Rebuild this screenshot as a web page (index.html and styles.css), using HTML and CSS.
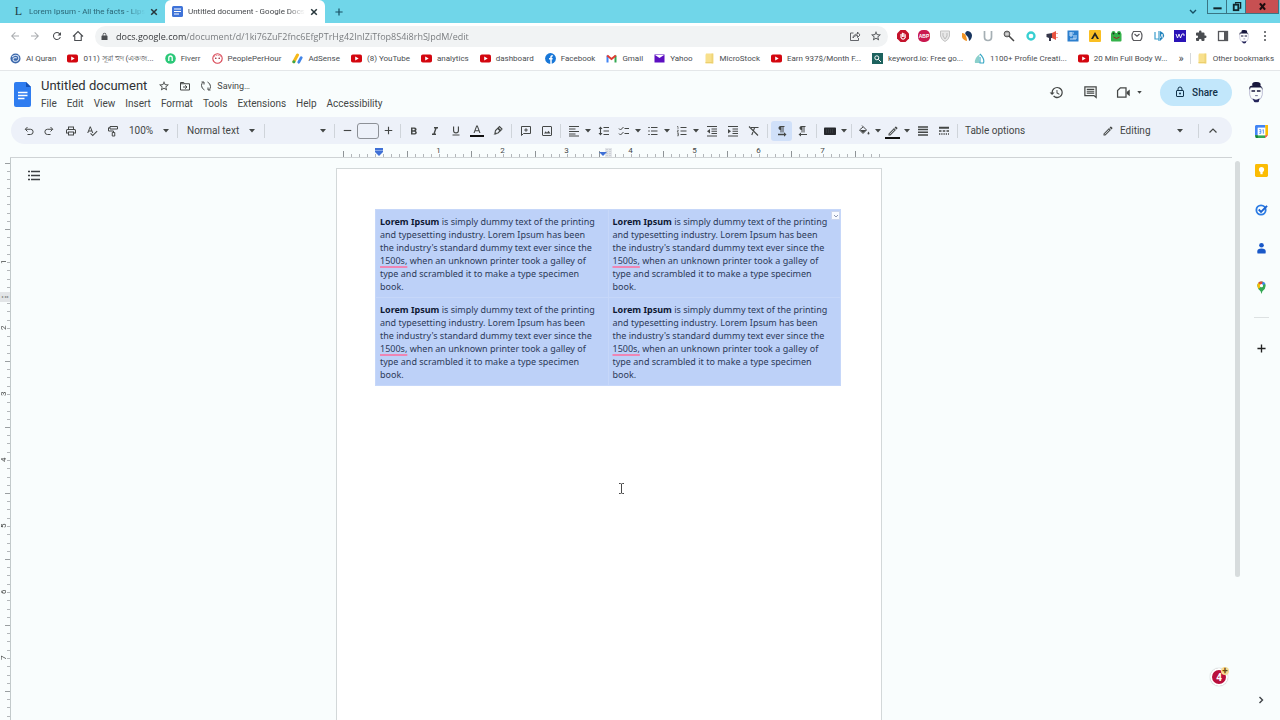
FILE: index.html
```html
<!DOCTYPE html>
<html lang="en">
<head>
<meta charset="utf-8">
<title>Untitled document - Google Docs</title>
<link rel="stylesheet" href="styles.css">
</head>
<body>
<svg class="defs" aria-hidden="true">
  <symbol id="caret" viewBox="0 0 6 4"><path d="M0 0h6L3 3.6z"/></symbol>
  <symbol id="close" viewBox="0 0 10 10"><path d="M1.5 1.5l7 7M8.500 1.500l-7 7" stroke="currentColor" stroke-width="1.900" fill="none"/></symbol>
  <symbol id="plus" viewBox="0 0 10 10"><path d="M5 .5v9M.5 5h9" stroke="currentColor" stroke-width="1.500" fill="none"/></symbol>
  <symbol id="doc" viewBox="0 0 17 25"><path d="M2 0h10l5 5v18a2 2 0 0 1-2 2H2a2 2 0 0 1-2-2V2a2 2 0 0 1 2-2z" fill="#2f7df0"/><path d="M12 0l5 5h-5z" fill="#1552b8"/><path d="M4 10.500h9.500M4 13.500h9.500M4 16.500h6.500" stroke="#fff" stroke-width="1.300"/></symbol>
  <symbol id="yt" viewBox="0 0 11 11"><rect y="1.500" width="11" height="8" rx="1.800" fill="#d3060f"/><path d="M4.200 3.600l3.500 1.900-3.500 1.900z" fill="#fff"/></symbol>
  <symbol id="folder" viewBox="0 0 11 11"><path d="M2 .5h7.500v10H1.500V2z" fill="#f8e08c"/><path d="M8.200.5v10M1.500 9.500h7" stroke="#e8ca66" stroke-width=".8"/></symbol>
  <symbol id="back" viewBox="0 0 24 24"><path d="M20 11H7.800l5.600-5.600L12 4l-8 8 8 8 1.400-1.400L7.800 13H20z"/></symbol>
  <symbol id="star" viewBox="0 0 24 24"><path d="M22 9.240l-7.190-.62L12 2 9.190 8.630 2 9.240l5.460 4.730L5.820 21 12 17.270 18.180 21l-1.630-7.030L22 9.240zM12 15.400l-3.760 2.270 1-4.280-3.320-2.880 4.380-.38L12 6.100l1.710 4.040 4.380.38-3.320 2.880 1 4.280L12 15.400z"/></symbol>
  <symbol id="pencil" viewBox="0 0 24 24"><path d="M14.060 9.020l.92.92L5.920 19H5v-.92l9.060-9.060M17.660 3c-.25 0-.51.1-.7.29l-1.830 1.830 3.750 3.750 1.830-1.830a1 1 0 0 0 0-1.410l-2.340-2.340c-.2-.2-.45-.29-.71-.29zm-3.600 3.190L3 17.250V21h3.750L17.810 9.940l-3.750-3.750z"/></symbol>
  <symbol id="pilcrow" viewBox="0 0 24 24"><path d="M9 10v5h2V4h2v11h2V4h2V2H9C6.800 2 5 3.800 5 6s1.800 4 4 4z"/></symbol>
  <symbol id="face" viewBox="0 0 20 24"><path d="M3 10C2 6 3 5 6 5 5 1 8 1 11 1q5 0 4 4 3 2 2 5l-1-3H4z" fill="#17173c"/><path d="M3 9v6q1 5 4 6M17 9v6q-1 5-4 6" fill="none" stroke="#b6b6cf" stroke-width="1"/><path d="M5 11h4M11 11h4" stroke="#17173c" stroke-width="1.700"/><path d="M9 16h3" stroke="#77779c" stroke-width="1.200"/><path d="M6 19q4 3 8 0l-1 4q-3 1-5 0z" fill="#24245a"/></symbol>
</svg>

<header class="browser">
  <div class="titlebar">
    <div class="tab">
      <span class="lip">L</span><span class="tab-title">Lorem Ipsum - All the facts - Lipsum</span>
      <button class="tab-close" aria-label="Close tab"><svg><use href="#close"/></svg></button>
    </div>
    <div class="tab active">
      <svg class="tab-ico" viewBox="0 0 11 11"><rect width="11" height="11" rx="1.500" fill="#3f73d8"/><path d="M2 3h7M2 5.500h7M2 8h5" stroke="#fff" stroke-width="1.200"/></svg><span class="tab-title">Untitled document - Google Docs</span>
      <button class="tab-close" aria-label="Close tab"><svg><use href="#close"/></svg></button>
    </div>
    <button class="new-tab" aria-label="New tab"><svg><use href="#plus"/></svg></button>
    <button class="tab-search" aria-label="Search tabs"><svg viewBox="0 0 8 5"><path d="M1 1l3 3 3-3" fill="none" stroke="#174f63" stroke-width="1.400"/></svg></button>
    <div class="window">
      <button aria-label="Minimize"><svg viewBox="0 0 12 12"><path d="M1.500 8h9" stroke="#10252b" stroke-width="2.200"/></svg></button>
      <button aria-label="Restore"><svg viewBox="0 0 12 12"><path d="M5 3V1.800h5.500v6H9" fill="none" stroke="#10252b" stroke-width="1.400"/><rect x="3" y="4" width="5" height="6" fill="none" stroke="#10252b" stroke-width="2"/></svg></button>
      <button class="win-close" aria-label="Close"><svg viewBox="0 0 12 12"><path d="M3.200 2.500l5.600 7M8.800 2.500l-5.600 7" stroke="#1d0c0e" stroke-width="2.300"/></svg></button>
    </div>
  </div>

  <div class="nav">
    <div class="nav-buttons">
      <button class="dim" aria-label="Back"><svg><use href="#back"/></svg></button>
      <button class="dim flip" aria-label="Forward"><svg><use href="#back"/></svg></button>
      <button aria-label="Reload"><svg viewBox="0 0 24 24"><path d="M17.650 6.350A8 8 0 1 0 19.730 14h-2.080A6 6 0 1 1 12 6c1.660 0 3.140.69 4.220 1.780L13 11h7V4z"/></svg></button>
      <button aria-label="Home"><svg viewBox="0 0 24 24"><path d="M2 13L12 3l10 10M5.500 11v10h13V11" fill="none" stroke="currentColor" stroke-width="2.200"/></svg></button>
    </div>
    <div class="omnibox">
      <svg class="lock" viewBox="0 0 24 24"><path d="M18 9h-1V7A5 5 0 0 0 7 7v2H6a2 2 0 0 0-2 2v10h16V11a2 2 0 0 0-2-2zM9 7a3 3 0 0 1 6 0v2H9z"/></svg>
      <input class="url" aria-label="Address" value="docs.google.com/document/d/1ki76ZuF2fnc6EfgPTrHg42InIZiTfop8S4i8rhSJpdM/edit">
      <button aria-label="Share page"><svg viewBox="0 0 24 24"><path d="M9 6H3v15h16v-5M8 16c0-5 4-8 9-8V4l5 6-5 5v-4c-4 0-7 1-9 5z" fill="none" stroke="currentColor" stroke-width="1.700"/></svg></button>
      <button aria-label="Bookmark"><svg><use href="#star"/></svg></button>
    </div>
    <div class="extensions">
      <button aria-label="AdBlock"><svg viewBox="0 0 12 12"><path d="M3.500 0h5L12 3.500v5L8.500 12h-5L0 8.500v-5z" fill="#c4122b"/><path d="M4 8V4M5.400 7V2.700M6.800 7V3M8.200 8V4.200M4 7.500q2 3.500 4.200 0" stroke="#fff" stroke-width="1.100" fill="none"/></svg></button>
      <button aria-label="Adblock Plus"><span class="abp">ABP</span></button>
      <button aria-label="Shield"><svg viewBox="0 0 12 12"><path d="M1.500 1h9v5q-1 4-4.500 5.500Q2.500 10 1.500 6z" fill="#e8e8e8" stroke="#c3c3c3"/><path d="M4 3v3l2 3 2-3V3" fill="none" stroke="#bbb"/></svg></button>
      <button aria-label="Similarweb"><svg viewBox="0 0 12 12"><path d="M6 1q4 0 5 4 0 4-3 6 0-4-3-6-2-2 1-4z" fill="#18355f"/><path d="M1 3q3 0 4 3t1 5q-4-1-5-4z" fill="#f29423"/></svg></button>
      <button aria-label="Ubersuggest"><svg viewBox="0 0 12 12"><path d="M2.500 1v6q0 3.500 3.500 3.500T9.500 7V1" fill="none" stroke="#a5afb4" stroke-width="1.700"/></svg></button>
      <button aria-label="Keyword search"><svg viewBox="0 0 12 12"><circle cx="4" cy="4" r="2.900" fill="#aaa" stroke="#555"/><path d="M6 6l5 5" stroke="#444" stroke-width="1.500"/><path d="M2.500 4h3" stroke="#fff"/></svg></button>
      <button aria-label="Ring"><svg viewBox="0 0 12 12"><circle cx="6" cy="6" r="3.500" fill="none" stroke="#37cfd1" stroke-width="2.300"/></svg></button>
      <button aria-label="Megaphone"><svg viewBox="0 0 12 12"><path d="M.5 4l6-1v5L5 8v3H3V8L.5 7z" fill="#36374b"/><path d="M6 3l4-2v9L6 8z" fill="#e85340"/><path d="M10.500 4l1-1M10.500 7l1 1" stroke="#e85340"/></svg></button>
      <button aria-label="Translate"><svg viewBox="0 0 12 12"><rect x=".5" y=".5" width="11" height="11" fill="#2c7fce"/><path d="M2 3h5M2 5h4M4 2v5M6 6h4M6 8h4M3 9h6" stroke="#d5eaff" stroke-width=".9"/></svg></button>
      <button aria-label="Amplifier"><svg viewBox="0 0 12 12"><rect width="12" height="12" rx="1" fill="#fabf22"/><path d="M2 9l4-7 4 7H8L6 5.500 4 9z" fill="#232323"/></svg></button>
      <button aria-label="Frog"><svg viewBox="0 0 12 12"><rect x="1" y="3" width="10.500" height="8.500" rx="1" fill="#35b24b"/><circle cx="3.500" cy="3" r="2" fill="#35b24b"/><circle cx="9" cy="3" r="2" fill="#35b24b"/><circle cx="3.500" cy="3.500" r="1" fill="#183c1f"/><circle cx="9" cy="3.500" r="1" fill="#183c1f"/><path d="M3.500 7q3 3 6 0" stroke="#a11f2a" fill="none"/></svg></button>
      <button aria-label="Mail"><svg viewBox="0 0 12 12"><path d="M2.500 1.500h7q1.500 2 1.500 4.500t-1.500 4.500h-7Q1 8.500 1 6t1.500-4.500z" fill="none" stroke="#59595d" stroke-width="1.200"/><path d="M3.500 4L6 6.200 8.500 4" fill="none" stroke="#59595d" stroke-width="1.200"/></svg></button>
      <button aria-label="LA"><svg viewBox="0 0 12 12"><path d="M2 2v7h4M6 1v10" stroke="#3a9ccb" fill="none" stroke-width="1.200"/><path d="M7 1q5 2 4 6L7 11z" fill="#2384bd"/><path d="M7.500 8L9 4l1 4" fill="none" stroke="#fff" stroke-width=".8"/></svg></button>
      <button aria-label="Write"><svg viewBox="0 0 12 12"><rect width="12" height="12" fill="#2a13b7"/><path d="M2 4l1.500 4L5 4l1.500 4L8 4h2v2" stroke="#fff" fill="none" stroke-width=".9"/></svg></button>
      <button aria-label="Extensions"><svg viewBox="0 0 24 24"><path d="M20.500 11H19V7a2 2 0 0 0-2-2h-4V3.500a2.500 2.500 0 0 0-5 0V5H4a2 2 0 0 0-2 2v3.800h1.500a2.700 2.700 0 0 1 0 5.400H2V20a2 2 0 0 0 2 2h3.800v-1.500a2.700 2.700 0 0 1 5.400 0V22H17a2 2 0 0 0 2-2v-4h1.500a2.500 2.500 0 0 0 0-5z"/></svg></button>
      <button aria-label="Side panel"><svg viewBox="0 0 12 12"><rect x="1.500" y="1.500" width="9" height="9" fill="none" stroke="#55565a" stroke-width="1.300"/><path d="M7 1.500h3.500v9H7z" fill="#55565a"/></svg></button>
      <button aria-label="Profile"><svg class="profile-ico"><use href="#face"/></svg></button>
      <button aria-label="Menu"><svg viewBox="0 0 24 24"><circle cx="12" cy="4" r="2"/><circle cx="12" cy="12" r="2"/><circle cx="12" cy="20" r="2"/></svg></button>
    </div>
  </div>

  <nav class="bookmarks" aria-label="Bookmarks">
    <a href="#"><svg viewBox="0 0 11 11"><circle cx="5.500" cy="5.500" r="5" fill="#3a67aa"/><path d="M2 4q3-3 6-1 2 3-1 5-4 1-4-2 1-2 4-1" fill="none" stroke="#d4e2f6" stroke-width="1.100"/></svg>Al Quran</a>
    <a href="#"><svg><use href="#yt"/></svg>011) সূরা হুদ (একজ...</a>
    <a href="#"><svg viewBox="0 0 11 11"><circle cx="5.500" cy="5.500" r="5.300" fill="#2bc878"/><path d="M3.800 8V4.800q0-1.800 1.700-1.800t1.700 1.800V8" fill="none" stroke="#fff" stroke-width="1.300"/></svg>Fiverr</a>
    <a href="#"><svg viewBox="0 0 11 11"><circle cx="5.500" cy="5.500" r="4.700" fill="#fff" stroke="#d94453" stroke-width="1.100"/><path d="M2 3.500Q5 1 9 3.500" fill="none" stroke="#d94453" stroke-dasharray="1 1"/><circle cx="3.800" cy="5.300" r=".8" fill="#8d1d2b"/><circle cx="7.200" cy="5.300" r=".8" fill="#8d1d2b"/></svg>PeoplePerHour</a>
    <a href="#"><svg viewBox="0 0 11 11"><path d="M1.800 8.700L5.500 2" stroke="#f6b91a" stroke-width="3" stroke-linecap="round"/><path d="M6.800 9.200l2.400-4.500" stroke="#4285e8" stroke-width="2.800" stroke-linecap="round"/><circle cx="1.900" cy="8.800" r="1.500" fill="#35a652"/></svg>AdSense</a>
    <a href="#"><svg><use href="#yt"/></svg>(8) YouTube</a>
    <a href="#"><svg><use href="#yt"/></svg>analytics</a>
    <a href="#"><svg><use href="#yt"/></svg>dashboard</a>
    <a href="#"><svg viewBox="0 0 11 11"><circle cx="5.500" cy="5.500" r="5.400" fill="#1877d8"/><path d="M6 11V4.200q0-1.500 1.800-1.400M4 5.800h3.600" stroke="#fff" stroke-width="1.500" fill="none"/></svg>Facebook</a>
    <a href="#"><svg viewBox="0 0 11 11"><path d="M1.500 9.500v-7" stroke="#4285f4" stroke-width="2"/><path d="M9.500 9.500v-7" stroke="#34a853" stroke-width="2"/><path d="M1.200 2.500l4.300 3.500 4.300-3.500" stroke="#df3b32" stroke-width="2" fill="none"/></svg>Gmail</a>
    <a href="#"><svg viewBox="0 0 11 11"><rect x=".5" y="1.500" width="10" height="8" fill="#5d0fc1"/><path d="M1 2l4.500 3L10 2" fill="#fff"/></svg>Yahoo</a>
    <a href="#"><svg><use href="#folder"/></svg>MicroStock</a>
    <a href="#"><svg><use href="#yt"/></svg>Earn 937$/Month F...</a>
    <a href="#"><svg viewBox="0 0 11 11"><rect width="11" height="11" fill="#1d625e"/><circle cx="4.800" cy="4.800" r="2" fill="none" stroke="#fff"/><path d="M6.300 6.300L9 9" stroke="#fff"/></svg>keyword.io: Free go...</a>
    <a href="#"><svg viewBox="0 0 11 11"><path d="M1 10q-1-5 5-9-2 5 0 9z" fill="#8bd0cb"/><path d="M6 1q5 5 3.500 9H6V4" fill="none" stroke="#37a7c4" stroke-width="1.100"/></svg>1100+ Profile Creati...</a>
    <a href="#"><svg><use href="#yt"/></svg>20 Min Full Body W...</a>
    <button class="more" aria-label="More bookmarks">»</button>
    <a href="#" class="other"><svg><use href="#folder"/></svg>Other bookmarks</a>
  </nav>
</header>

<div class="docs">
  <main class="main">
    <div class="head">
      <svg class="logo"><use href="#doc"/></svg>
      <div class="head-text">
        <div class="title-row">
          <h1>Untitled document</h1>
          <button aria-label="Star"><svg><use href="#star"/></svg></button>
          <button aria-label="Move"><svg viewBox="0 0 24 24"><path d="M3 5h6.500l2 2.500H21V20H3zM3 7.500h8" fill="none" stroke="currentColor" stroke-width="2"/><path d="M8 14h8M12.500 10.500L16 14l-3.500 3.500" fill="none" stroke="currentColor" stroke-width="2"/></svg></button>
          <span class="saving"><svg viewBox="0 0 24 24"><path d="M9 20Q3 17 3 11q0-4 3-6.500M3 4h5v5M15 4q6 3 6 9 0 4-3 6.500M21 20h-5v-5" fill="none" stroke="currentColor" stroke-width="2"/></svg>Saving…</span>
        </div>
        <div class="menus">
          <button>File</button><button>Edit</button><button>View</button><button>Insert</button><button>Format</button><button>Tools</button><button>Extensions</button><button>Help</button><button>Accessibility</button>
        </div>
      </div>
      <div class="head-actions">
        <button aria-label="History"><svg viewBox="0 0 24 24"><path d="M13 3a9 9 0 0 0-9 9H1l3.900 3.900L9 12H6a7 7 0 1 1 2.060 4.940l-1.420 1.420A9 9 0 1 0 13 3zm-1 5v5l4.250 2.520.77-1.280-3.520-2.090V8z"/></svg></button>
        <button aria-label="Comments"><svg viewBox="0 0 24 24"><path d="M3 3h18v17l-3.500-3H3z" fill="none" stroke="currentColor" stroke-width="2"/><path d="M6 7h12M6 10h12M6 13h12" stroke="currentColor" stroke-width="1.800"/></svg></button>
        <button class="meet" aria-label="Meet"><svg viewBox="0 0 24 24"><path d="M7 4.500h9v15H2.500V9z" fill="none" stroke="currentColor" stroke-width="2"/><path d="M17 11l5-4v11l-5-4z"/></svg><svg class="caret"><use href="#caret"/></svg></button>
        <button class="share"><svg viewBox="0 0 24 24"><rect x="5" y="9" width="14" height="12" rx="1" fill="none" stroke="currentColor" stroke-width="2"/><path d="M8 9V6a4 4 0 0 1 8 0v3" fill="none" stroke="currentColor" stroke-width="2"/><circle cx="12" cy="15" r="2"/></svg>Share</button>
      </div>
    </div>

    <div class="toolbar" role="toolbar">
      <button class="t" aria-label="Undo"><svg viewBox="0 0 24 24"><path d="M9 19h6a5 5 0 0 0 0-10.500H5M9 4L4.500 8.500 9 13" fill="none" stroke="currentColor" stroke-width="2"/></svg></button>
      <button class="t flip" aria-label="Redo"><svg viewBox="0 0 24 24"><path d="M9 19h6a5 5 0 0 0 0-10.500H5M9 4L4.500 8.500 9 13" fill="none" stroke="currentColor" stroke-width="2"/></svg></button>
      <button class="t" aria-label="Print"><svg viewBox="0 0 24 24"><path d="M19 8h-1V3H6v5H5a3 3 0 0 0-3 3v6h4v4h12v-4h4v-6a3 3 0 0 0-3-3zM8 5h8v3H8zm8 14H8v-4h8zm2-4v-2H6v2H4v-4a1 1 0 0 1 1-1h14a1 1 0 0 1 1 1v4z"/></svg></button>
      <button class="t" aria-label="Spelling"><svg viewBox="0 0 24 24"><path d="M12.450 16h2.090L9.430 3H7.570L2.460 16h2.090l1.120-3h5.640zm-6.020-5L8.500 5.480 10.570 11zm15.160.59l-8.090 8.090L9.830 16l-1.410 1.410 5.090 5.090L23 13z"/></svg></button>
      <button class="t" aria-label="Paint format"><svg viewBox="0 0 24 24"><path d="M6 3h15v5H6zM6 5.500H3V12h10v3" fill="none" stroke="currentColor" stroke-width="2"/><path d="M10.500 15h5v7h-5z" fill="none" stroke="currentColor" stroke-width="2"/></svg></button>
      <label class="combo zoom"><select aria-label="Zoom"><option>100%</option></select><svg class="caret"><use href="#caret"/></svg></label>
      <i class="sep"></i>
      <label class="combo style"><select aria-label="Style"><option>Normal text</option></select><svg class="caret"><use href="#caret"/></svg></label>
      <i class="sep"></i>
      <label class="combo font"><select aria-label="Font"><option></option></select><svg class="caret"><use href="#caret"/></svg></label>
      <i class="sep"></i>
      <button class="s" aria-label="Decrease font size"><svg viewBox="0 0 24 24"><path d="M2 12h20" stroke="currentColor" stroke-width="3"/></svg></button>
      <input class="size" aria-label="Font size">
      <button class="s" aria-label="Increase font size"><svg viewBox="0 0 24 24"><path d="M2 12h20M12 2v20" stroke="currentColor" stroke-width="3"/></svg></button>
      <i class="sep tight"></i>
      <button class="t" aria-label="Bold"><svg viewBox="0 0 24 24"><path d="M15.600 11.800c1-.7 1.600-1.800 1.600-2.800a4 4 0 0 0-4-4H6v14h8c2.100 0 3.700-1.700 3.700-3.800 0-1.500-.8-2.800-2.100-3.400zM9 7.500h3a1.500 1.500 0 0 1 0 3H9zm4 9H9v-3h4a1.500 1.500 0 0 1 0 3z"/></svg></button>
      <button class="t" aria-label="Italic"><svg viewBox="0 0 24 24"><path d="M10 4v3h2.200l-3.400 10H6v3h8v-3h-2.200l3.400-10H18V4z"/></svg></button>
      <button class="t" aria-label="Underline"><svg viewBox="0 0 24 24"><path d="M12 17a6 6 0 0 0 6-6V3h-2.300v8a3.700 3.700 0 0 1-7.400 0V3H6v8a6 6 0 0 0 6 6zm-7 2v2h14v-2z"/></svg></button>
      <button class="t color" aria-label="Text color"><svg viewBox="0 0 24 20"><path d="M10.600 1L5 16h2.300l1.200-3.500h7l1.200 3.500H19L13.400 1zM9.200 10.500L12 3l2.800 7.500z"/></svg></button>
      <button class="t" aria-label="Highlight"><svg viewBox="0 0 24 24"><path d="M6 16l1-5 8-8 5 5-8 8-5 1z" fill="none" stroke="currentColor" stroke-width="2.200"/><path d="M13 5l6 6-3 2-5-5zM3 19l4-4 2.500 2.500L8 19z"/></svg></button>
      <i class="sep"></i>
      <button class="t" aria-label="Add comment"><svg viewBox="0 0 24 24"><path d="M3 3h18v14H7l-4 4zM12 6.500v7M8.500 10h7" fill="none" stroke="currentColor" stroke-width="2"/></svg></button>
      <button class="t" aria-label="Insert image"><svg viewBox="0 0 24 24"><rect x="3" y="3" width="18" height="18" rx="1" fill="none" stroke="currentColor" stroke-width="2"/><path d="M6 17l3.500-4.500 2.500 3 3-4 4 5.500z"/></svg></button>
      <i class="sep"></i>
      <button class="c" aria-label="Align"><svg viewBox="0 0 24 24"><path d="M2 3h20M2 8h13M2 13h20M2 18h13M2 22h20" stroke="currentColor" stroke-width="2"/></svg><svg class="caret"><use href="#caret"/></svg></button>
      <button class="t" aria-label="Line spacing"><svg viewBox="0 0 24 24"><path d="M11 5h11M11 12h11M11 19h11M5 5v14" stroke="currentColor" stroke-width="2.200"/><path d="M1 8l4-5 4 5zM1 16l4 5 4-5z"/></svg></button>
      <button class="c" aria-label="Checklist"><svg viewBox="0 0 24 24"><path d="M13 7h9M13 17h9M2 7l3 3 6-6M2 17l3 3 6-6" fill="none" stroke="currentColor" stroke-width="2"/></svg><svg class="caret"><use href="#caret"/></svg></button>
      <button class="c" aria-label="Bulleted list"><svg viewBox="0 0 24 24"><path d="M8 5h13M8 12h13M8 19h13M2.500 5h3M2.500 12h3M2.500 19h3" stroke="currentColor" stroke-width="2.400"/></svg><svg class="caret"><use href="#caret"/></svg></button>
      <button class="c" aria-label="Numbered list"><svg viewBox="0 0 24 24"><path d="M9 5h12M9 12h12M9 19h12" stroke="currentColor" stroke-width="2.200"/><path d="M2 3h2v5M2 10.500h3l-3 3.500h3.500M2 16.500h3v5H2M3 19h2" fill="none" stroke="currentColor" stroke-width="1.300"/></svg><svg class="caret"><use href="#caret"/></svg></button>
      <button class="t" aria-label="Decrease indent"><svg viewBox="0 0 24 24"><path d="M2 3h20M11 8h11M11 12.500h11M11 17h11M2 22h20" stroke="currentColor" stroke-width="2"/><path d="M2 12.500L8 8v9z"/></svg></button>
      <button class="t" aria-label="Increase indent"><svg viewBox="0 0 24 24"><path d="M2 3h20M11 8h11M11 12.500h11M11 17h11M2 22h20" stroke="currentColor" stroke-width="2"/><path d="M8 12.500L2 8v9z"/></svg></button>
      <button class="t" aria-label="Clear formatting"><svg viewBox="0 0 24 24"><path d="M2 3l18 18M6 5h15M13 6l-2 5M10 14l-2.500 6" stroke="currentColor" stroke-width="2.200"/></svg></button>
      <i class="sep"></i>
      <button class="t on" aria-label="Left to right"><svg viewBox="0 0 24 24"><use href="#pilcrow"/><path d="M4 17.500h12v-3l5 4.500-5 4.500v-3H4z"/></svg></button>
      <button class="t" aria-label="Right to left"><svg viewBox="0 0 24 24"><use href="#pilcrow"/><path d="M20 18H8v-3l-5 4 5 4v-3h12z"/></svg></button>
      <i class="sep"></i>
      <button class="c" aria-label="Input tools"><svg viewBox="0 0 24 24"><rect x="0" y="5" width="24" height="15" rx="1.500" fill="#26282c"/><path d="M4 10h16M4 14h16" stroke="#5b6068" stroke-width="1.200" stroke-dasharray="2 2"/></svg><svg class="caret"><use href="#caret"/></svg></button>
      <i class="sep tight"></i>
      <button class="c" aria-label="Cell background"><svg viewBox="0 0 24 24"><path d="M8 1l9 9-7 7-7-7 7-6" fill="none" stroke="currentColor" stroke-width="2"/><path d="M4 10h13l-7 6zM21 13q-4 5 0 6 4-1 0-6z"/></svg><svg class="caret"><use href="#caret"/></svg></button>
      <button class="c border" aria-label="Border color"><svg><use href="#pencil"/></svg><svg class="caret"><use href="#caret"/></svg></button>
      <button class="t" aria-label="Border width"><svg viewBox="0 0 24 24"><path d="M2 4h20M2 9h20M2 14.500h20M2 20h20" stroke="currentColor" stroke-width="3"/></svg></button>
      <button class="t" aria-label="Border dash"><svg viewBox="0 0 24 24"><path d="M2 5.500h20" stroke="currentColor" stroke-width="4"/><path d="M2 12h20" stroke="currentColor" stroke-width="3" stroke-dasharray="5 2.500"/><path d="M2 18h20" stroke="currentColor" stroke-width="3" stroke-dasharray="2.500 2"/></svg></button>
      <i class="sep"></i>
      <button class="text-button">Table options</button>
      <label class="combo mode"><svg class="mode-ico"><use href="#pencil"/></svg><select aria-label="Mode"><option>Editing</option></select><svg class="caret"><use href="#caret"/></svg></label>
      <i class="sep"></i>
      <button class="t" aria-label="Hide menus"><svg viewBox="0 0 24 24"><path d="M5 15l7-7 7 7" fill="none" stroke="currentColor" stroke-width="2.400"/></svg></button>
    </div>

    <div class="hruler">
      <div class="hscale">
        <span>1</span><span>2</span><span>3</span><span>4</span><span>5</span><span>6</span><span>7</span>
        <svg class="marker first" viewBox="0 0 10 9"><path d="M1 0h8v4L5 8 1 4z" fill="#3f70d6"/><path d="M1 2.500h8" stroke="#a9c0ef" stroke-width=".7"/></svg>
        <svg class="marker second" viewBox="0 0 14 9"><path d="M7 0h7v9H7z" fill="#e2e5e9"/><path d="M9 1v7M12 1v7" stroke="#b6bbc2" stroke-dasharray="1 1"/><path d="M1 4h8L5 8z" fill="#3f70d6"/></svg>
      </div>
    </div>

    <div class="work">
      <div class="vruler"><div class="vscale"><span>1</span><span>2</span><span>3</span><span>4</span><span>5</span><span>6</span><span>7</span><b>⋮</b></div></div>
      <div class="canvas">
        <button class="outline" aria-label="Show outline"><svg viewBox="0 0 12 11"><path d="M3 1.500h9M3 5.500h9M3 9.500h9M0 1.500h2M0 5.500h2M0 9.500h2" stroke="#3c4043" stroke-width="1.500"/></svg></button>
        <article class="page">
          <table>
            <tbody>
              <tr>
                <td><strong>Lorem Ipsum</strong> is simply dummy text of the printing and typesetting industry. Lorem Ipsum has been the industry's standard dummy text ever since the <u>1500s,</u> when an unknown printer took a galley of type and scrambled it to make a type specimen book.</td>
                <td><strong>Lorem Ipsum</strong> is simply dummy text of the printing and typesetting industry. Lorem Ipsum has been the industry's standard dummy text ever since the <u>1500s,</u> when an unknown printer took a galley of type and scrambled it to make a type specimen book.<button class="cell-menu" aria-label="Cell options"><svg viewBox="0 0 6 4"><path d="M1 1l2 2 2-2" fill="none" stroke="#8d99b3"/></svg></button></td>
              </tr>
              <tr>
                <td><strong>Lorem Ipsum</strong> is simply dummy text of the printing and typesetting industry. Lorem Ipsum has been the industry's standard dummy text ever since the <u>1500s,</u> when an unknown printer took a galley of type and scrambled it to make a type specimen book.</td>
                <td><strong>Lorem Ipsum</strong> is simply dummy text of the printing and typesetting industry. Lorem Ipsum has been the industry's standard dummy text ever since the <u>1500s,</u> when an unknown printer took a galley of type and scrambled it to make a type specimen book.</td>
              </tr>
            </tbody>
          </table>
        </article>
      </div>
    </div>
  </main>

  <div class="scroll"><i></i></div>

  <aside class="side">
    <button class="avatar" aria-label="Account"><svg><use href="#face"/></svg></button>
    <button aria-label="Calendar"><svg viewBox="0 0 14 14"><path d="M1 0h10v3H3v8H0V1z" fill="#4285f4"/><path d="M11 0h3v11h-3z" fill="#fbbc04"/><path d="M0 11h11v3H1z" fill="#34a853"/><path d="M0 11h3v3H1z" fill="#188038"/><path d="M11 11h3l-3 3z" fill="#ea4335"/><path d="M3 3h8v8H3z" fill="#fff"/><path d="M4.500 5h1.800v4H4.500M4.800 7h1.500M8 5.500l1-.5v4.300" fill="none" stroke="#4285f4" stroke-width=".9"/></svg></button>
    <button aria-label="Keep"><svg viewBox="0 0 14 14"><rect width="14" height="14" rx="1.500" fill="#fbbc04"/><circle cx="7" cy="6" r="2.800" fill="#fff"/><path d="M5.800 8h2.400v3H5.800z" fill="#fff"/></svg></button>
    <button aria-label="Tasks"><svg viewBox="0 0 14 14"><circle cx="6.500" cy="7.500" r="5" fill="none" stroke="#2a7be4" stroke-width="2"/><path d="M4 7l2.500 2.500L13 3" fill="none" stroke="#1b62cf" stroke-width="2"/></svg></button>
    <button aria-label="Contacts"><svg viewBox="0 0 14 14"><circle cx="7" cy="3.500" r="2.500" fill="#1a58c8"/><path d="M2.500 10q0-3 4.500-3t4.500 3v1.500q0 1-1 1h-7q-1 0-1-1z" fill="#1a58c8"/></svg></button>
    <button aria-label="Maps"><svg viewBox="0 0 14 14"><path d="M7 .5a4.500 4.500 0 0 1 4.500 4.500Q11.500 8 8 11l-1 3-1-3Q2.500 8 2.500 5A4.500 4.500 0 0 1 7 .5z" fill="#34a853"/><path d="M7 5L3.500 2A4.500 4.500 0 0 1 8.500.8z" fill="#ea4335"/><path d="M8.500.8A4.500 4.500 0 0 1 11.200 3L7 5z" fill="#4285f4"/><path d="M7 5L3.500 2Q2 4 2.900 6.500L4 8.500z" fill="#fbbc04"/><circle cx="7" cy="5" r="1.700" fill="#fff"/></svg></button>
    <hr>
    <button class="add" aria-label="Get add-ons"><svg><use href="#plus"/></svg></button>
    <button class="collapse" aria-label="Hide side panel"><svg viewBox="0 0 6 8"><path d="M1.500 1l3 3-3 3" fill="none" stroke="#3f4347" stroke-width="1.400"/></svg></button>
  </aside>

  <button class="badge">4<span>+</span></button>
  <svg class="ibeam" viewBox="0 0 7 11"><path d="M1 .5h1.500l1 .5 1-.5H6M3.500 1v9M1 10.500h1.500l1-.5 1 .5H6" fill="none" stroke="#333" stroke-width=".9"/></svg>
</div>
</body>
</html>
```

FILE: styles.css
```css
* { box-sizing: border-box; }

body {
  margin: 0;
  height: 100vh;
  overflow: hidden;
  display: flex;
  flex-direction: column;
  font-family: Roboto, "Noto Sans", sans-serif;
  font-size: 10px;
  color: #444746;
  background: #f9fdfd;
}

.defs { position: absolute; width: 0; height: 0; }

button, input, select {
  font: inherit;
  color: inherit;
  border: 0;
  padding: 0;
  margin: 0;
  background: none;
  outline: 0;
}

button {
  display: flex;
  align-items: center;
  justify-content: center;
  flex: none;
}

svg { display: block; flex: none; fill: currentColor; }
.flip { transform: scaleX(-1); }
.caret { width: 6px; height: 4px; }

/* Browser window */
.browser {
  flex: none;
  background: #fff;
  border-bottom: 1px solid #e4e7e9;
  font-size: 8px;
  color: #4a4d51;
}

.titlebar {
  display: flex;
  height: 23px;
  padding-left: 6px;
  background: #70d6e9;
}

.tab {
  display: flex;
  align-items: center;
  width: 159px;
  padding: 0 7px;
  gap: 5px;
  color: #2b6676;
}

.tab.active { background: #fff; border-radius: 6px 6px 0 0; color: #44474b; width: 160px; }
.lip { width: 11px; text-align: center; font: 12px "Liberation Serif", serif; color: #203c44; }
.tab-ico { width: 11px; height: 11px; }

.tab-title {
  flex: 1;
  overflow: hidden;
  white-space: nowrap;
  mask-image: linear-gradient(90deg, #000 85%, transparent);
}

.tab-close svg { width: 8px; height: 8px; }
.tab-close { color: #27363b; }
.new-tab { width: 28px; color: #174f63; }
.new-tab svg { width: 8px; height: 8px; }
.tab-search { margin-left: auto; width: 16px; margin-right: 6px; }
.tab-search svg { width: 8px; height: 5px; }
.window { display: flex; height: 14px; margin-right: 1px; border: 1px solid #397584; border-top: 0; }
.window button { width: 19px; border-right: 1px solid #397584; }
.window .win-close { width: 32px; background: #c75052; border: 0; }
.window svg { width: 11px; height: 11px; }

.nav { display: flex; align-items: center; height: 25px; padding: 1px 4px 0 4px; }
.nav-buttons { display: flex; width: 91px; }
.nav-buttons button { width: 21px; }
.nav-buttons svg { width: 12px; height: 12px; }
.nav .dim { color: #a9acaf; }

.omnibox {
  flex: 1;
  display: flex;
  align-items: center;
  height: 21px;
  padding: 0 2px 0 5px;
  border-radius: 11px;
  background: #f1f3f4;
}

.lock { width: 9px; height: 9px; margin-right: 7px; }

.url {
  flex: 1;
  font-family: "Open Sans", "Noto Sans", sans-serif;
  font-size: 9px;
  color: transparent;
  background: linear-gradient(90deg, #303235 70px, #74777a 70px);
  background-clip: text;
}

.omnibox button { width: 21px; }
.omnibox button svg { width: 12px; height: 12px; }
.extensions { display: flex; width: 384px; margin-left: 4px; justify-content: space-around; }
.extensions button { width: 20px; }
.extensions svg { width: 12px; height: 12px; }
.extensions .profile-ico { height: 15px; }

.abp {
  width: 12px;
  border-radius: 5px;
  background: #c9184f;
  color: #fff;
  font: bold 5px/12px "Liberation Sans", sans-serif;
}

.bookmarks { display: flex; align-items: center; height: 22px; padding: 0 7px 2px 10px; gap: 11px; }
.bookmarks a { display: flex; align-items: center; gap: 5px; color: inherit; text-decoration: none; white-space: nowrap; }
.bookmarks svg { width: 11px; height: 11px; }
.bookmarks .more { margin-left: auto; font-size: 11px; }
.bookmarks .other { border-left: 1px solid #d5d8da; padding-left: 6px; margin-left: -5px; }

/* Editor frame */
.docs { position: relative; flex: 1; min-height: 0; display: flex; }
.main { flex: 1; min-width: 0; display: flex; flex-direction: column; }

.head { display: flex; align-items: flex-start; padding: 7px 0 0 14px; height: 46px; }
.logo { width: 17px; height: 25px; margin: 4px 10px 0 0; }
.head-text { flex: 1; }
.title-row { display: flex; align-items: center; height: 15px; }
.title-row h1 { margin: 0 11px 0 0; font-size: 13px; font-weight: 400; color: #2f3133; }
.title-row svg { width: 12px; height: 12px; }
.title-row button { width: 12px; margin-right: 9px; }
.saving { display: flex; align-items: center; gap: 5px; font-size: 9px; }
.menus { display: flex; gap: 10px; margin-top: 4px; }
.menus button { line-height: 13px; }

.head-actions { display: flex; align-items: center; height: 28px; }
.head-actions svg { width: 15px; height: 15px; }
.head-actions button { width: 34px; }
.head-actions .meet { width: 44px; gap: 6px; }
.head-actions .caret { width: 5px; height: 3px; }

.head-actions .share {
  width: 72px;
  height: 27px;
  gap: 6px;
  margin-left: 9px;
  border-radius: 14px;
  background: #c2e7fb;
  color: #123249;
  font-weight: 500;
}

.head-actions .share svg { width: 12px; height: 12px; }

.toolbar {
  display: flex;
  align-items: center;
  height: 27px;
  margin-left: 11px;
  padding: 0 9px 0 7px;
  border-radius: 14px;
  background: #edf1f9;
}

.toolbar .t { width: 21px; height: 20px; }
.toolbar svg { width: 12px; height: 12px; }
.toolbar .caret { width: 6px; height: 4px; }
.toolbar .s { width: 19px; }
.toolbar .s svg { width: 9px; height: 9px; }
.toolbar .c { width: 29px; height: 20px; gap: 5px; padding-left: 4px; justify-content: flex-start; }
.toolbar .on { background: #d0e0f9; border-radius: 3px; }
.color { flex-direction: column; }
.toolbar .color svg { height: 10px; }
.color::after { content: ""; width: 14px; height: 2px; background: #111; }
.border { position: relative; }
.border::after { content: ""; position: absolute; left: 2px; bottom: 2px; width: 15px; height: 2px; background: #111; }
.sep { width: 1px; height: 14px; margin: 0 3px; background: #cfd4da; flex: none; }
.sep.tight { margin: 0 2px; }
.combo { display: flex; align-items: center; flex: none; }
.combo select { flex: 1; min-width: 0; appearance: none; line-height: 14px; }
.zoom { width: 51px; padding: 0 5px 0 6px; }
.style { width: 80px; padding: 0 6px; }
.font { width: 63px; padding: 0 5px; }
.size { width: 22px; height: 16px; border: 1px solid #8d9197; border-radius: 3px; text-align: center; }
.text-button { margin-left: 4px; }
.mode { width: 93px; margin-left: auto; padding: 0 12px 0 0; }
.toolbar .mode-ico { margin-right: 6px; }

/* Rulers */
.hruler {
  height: 14px;
  margin-left: 10px;
  padding-right: 25px;
  display: flex;
  justify-content: center;
  border-bottom: 1px solid #cfd3d5;
}

.hscale {
  position: relative;
  display: flex;
  width: 546px;
  padding-left: 71px;
  font-size: 8px;
  line-height: 14px;
  background:
    linear-gradient(90deg, #8f9497 1px, transparent 1px) 7px 100% / 64px 6px repeat-x,
    linear-gradient(90deg, #b3b7ba 1px, transparent 1px) 7px 100% / 8px 3px repeat-x;
}

.hscale span { width: 64px; flex: none; text-align: center; }
.marker { position: absolute; top: 4px; height: 9px; }
.first { left: 38px; width: 10px; }
.second { left: 262px; width: 14px; }

.work { flex: 1; min-height: 0; display: flex; }
.vruler { width: 10px; overflow: hidden; padding-top: 5px; }

.vscale {
  position: relative;
  display: flex;
  flex-direction: column;
  height: 100%;
  padding-top: 66px;
  font-size: 8px;
  background:
    linear-gradient(#9a9fa1 1px, transparent 1px) 100% 0 / 5px 66px repeat-y,
    linear-gradient(#b3b7ba 1px, transparent 1px 8px, #b3b7ba 8px 9px, transparent 9px 16px, #b3b7ba 16px 17px, transparent 17px 25px, #b3b7ba 25px 26px, transparent 26px 33px, #b3b7ba 33px 34px, transparent 34px 41px, #b3b7ba 41px 42px, transparent 42px 50px, #b3b7ba 50px 51px, transparent 51px 58px, #b3b7ba 58px 59px, transparent 59px) 100% 0 / 3px 66px repeat-y;
}

.vscale span {
  height: 66px;
  flex: none;
  width: 7px;
  line-height: 7px;
  text-align: center;
  writing-mode: vertical-rl;
  rotate: 180deg;
}

.vscale b { position: absolute; top: 129px; width: 10px; height: 10px; background: #e2e5e7; line-height: 10px; text-align: center; rotate: 90deg; }

.canvas {
  position: relative;
  flex: 1;
  display: flex;
  justify-content: center;
  padding: 10px 25px 0 0;
  border-left: 1px solid #c3cacb;
  overflow: hidden;
}

.outline { position: absolute; left: 17px; top: 12px; }
.outline svg { width: 12px; height: 11px; }

.page {
  width: 546px;
  height: 705px;
  padding: 40px 40px 0 38px;
  border: 1px solid #d3d8d9;
  background: #fff;
}

.page table {
  width: 466px;
  table-layout: fixed;
  border-collapse: collapse;
  background: #bdd1f8;
  font-family: "Noto Sans", "Open Sans", sans-serif;
  font-size: 9px;
  line-height: 13px;
  color: #2c3a58;
}

.page td { position: relative; height: 88px; padding: 5px 10px 4px 4px; vertical-align: top; border: 1px solid #c6d7f9; }
.page strong { color: #0e1833; }
.page u { text-decoration: underline 2px #ee86b4; text-underline-offset: 2px; text-decoration-skip-ink: none; }
.cell-menu { position: absolute; right: 0; top: 1px; width: 9px; height: 9px; background: #f7faff; border: 1px solid #cbd6ee; }
.cell-menu svg { width: 6px; height: 4px; }

/* Scrollbar and side panel */
.scroll { width: 10px; padding: 90px 2px 0 3px; }
.scroll i { display: block; height: 416px; border-radius: 3px; background: #d7dcdd; }

.side { width: 38px; display: flex; flex-direction: column; align-items: center; padding-top: 7px; }
.side button { width: 24px; height: 24px; margin-bottom: 15px; }
.side svg { width: 13px; height: 13px; }
.side .avatar { height: 28px; margin-bottom: 13px; margin-right: 10px; }
.side .avatar svg { width: 18px; height: 22px; }
.side hr { width: 15px; margin: 3px 0 18px; border: 0; border-top: 1px solid #dde1e2; }
.side .add { color: #222; }
.side .add svg { width: 9px; height: 9px; }
.side .collapse { margin: auto 0 8px; }
.side .collapse svg { width: 6px; height: 8px; }

.badge {
  position: absolute;
  right: 52px;
  bottom: 34px;
  width: 18px;
  height: 18px;
  border-radius: 9px;
  border: 2px solid #fff;
  background: #b90f3c;
  box-shadow: 0 0 1px #8a9092;
  color: #fff;
  font-size: 10px;
  font-weight: 700;
}

.badge span {
  position: absolute;
  right: -3px;
  top: -3px;
  width: 8px;
  height: 8px;
  border-radius: 4px;
  background: #f7dc94;
  color: #6c4a0c;
  line-height: 8px;
}

.ibeam { position: absolute; left: 618px; top: 412px; width: 7px; height: 11px; }
```
